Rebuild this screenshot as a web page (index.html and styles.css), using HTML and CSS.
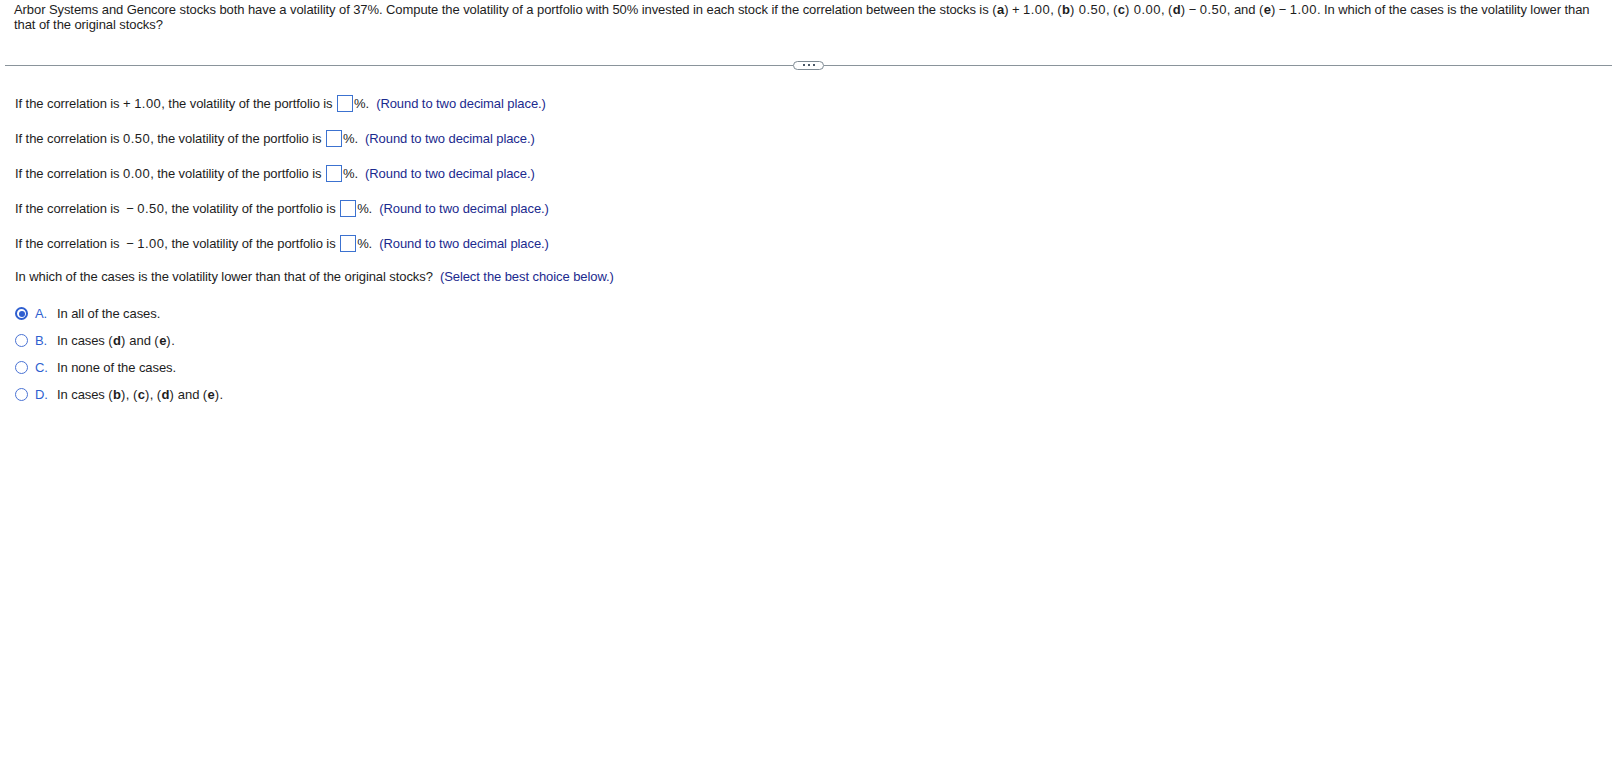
FILE: index.html
```html
<!DOCTYPE html>
<html>
<head>
<meta charset="utf-8">
<link rel="stylesheet" href="styles.css">
</head>
<body>
<div class="page">
  <p class="question">Arbor Systems and Gencore stocks both have a volatility of 37%. Compute the volatility of a portfolio with 50% invested in each stock if the correlation between the stocks is <span class="m">(<b>a</b>)&#8201;+&#8201;1.00</span>, <span class="m">(<b>b</b>) 0.50</span>, <span class="m">(<b>c</b>) 0.00</span>, <span class="m">(<b>d</b>)&#8201;&#8722;&#8201;0.50</span>, and <span class="m">(<b>e</b>)&#8201;&#8722;&#8201;1.00</span>. In which of the cases is the volatility lower than that of the original stocks?</p>

  <div class="divider">
    <span class="line"></span>
    <span class="pill"><i></i><i></i><i></i></span>
    <span class="line"></span>
  </div>

  <div class="answers">
    <div class="row">If the correlation is <span class="m">+&#8201;1.00</span>, the volatility of the portfolio is <span class="box"></span>%.  <span class="hint">(Round to two decimal place.)</span></div>
    <div class="row">If the correlation is <span class="m">0.50</span>, the volatility of the portfolio is <span class="box"></span>%.  <span class="hint">(Round to two decimal place.)</span></div>
    <div class="row">If the correlation is <span class="m">0.00</span>, the volatility of the portfolio is <span class="box"></span>%.  <span class="hint">(Round to two decimal place.)</span></div>
    <div class="row">If the correlation is <span class="m">&#8201;&#8722;&#8201;0.50</span>, the volatility of the portfolio is <span class="box"></span>%.  <span class="hint">(Round to two decimal place.)</span></div>
    <div class="row">If the correlation is <span class="m">&#8201;&#8722;&#8201;1.00</span>, the volatility of the portfolio is <span class="box"></span>%.  <span class="hint">(Round to two decimal place.)</span></div>
    <div class="row ask">In which of the cases is the volatility lower than that of the original stocks?  <span class="hint">(Select the best choice below.)</span></div>
  </div>

  <ul class="choices">
    <li><span class="radio checked"></span><span class="letter">A.</span>In all of the cases.</li>
    <li><span class="radio"></span><span class="letter">B.</span>In cases <span class="m">(<b>d</b>)</span> and <span class="m">(<b>e</b>)</span>.</li>
    <li><span class="radio"></span><span class="letter">C.</span>In none of the cases.</li>
    <li><span class="radio"></span><span class="letter">D.</span>In cases <span class="m">(<b>b</b>)</span>, <span class="m">(<b>c</b>)</span>, <span class="m">(<b>d</b>)</span> and <span class="m">(<b>e</b>)</span>.</li>
  </ul>
</div>
</body>
</html>
```

FILE: styles.css
```css
html, body {
  margin: 0;
  padding: 0;
  background: #ffffff;
}
body {
  font-family: "Liberation Sans", Arial, sans-serif;
  font-size: 13px;
  letter-spacing: -0.08px;
  color: #1d1d1d;
}
.page {
  padding: 2px 0 0 0;
}
.question {
  margin: 0;
  padding: 0 8px 0 14px;
  line-height: 15px;
}
.m {
  letter-spacing: 0.45px;
}
.m b {
  font-weight: bold;
  letter-spacing: 0;
}
.divider {
  display: flex;
  align-items: center;
  margin: 28px 1px 0 5px;
  height: 10px;
}
.line {
  flex: 1;
  height: 1px;
  background: #8a949b;
}
.pill {
  display: flex;
  align-items: center;
  justify-content: center;
  gap: 3px;
  width: 29px;
  height: 7px;
  border: 1px solid #7e8a93;
  border-radius: 5px;
  background: #fff;
}
.pill i {
  width: 2px;
  height: 2px;
  background: #4a5866;
}
.answers {
  margin-top: 25px;
  padding-left: 15px;
}
.row {
  display: flex;
  align-items: center;
  height: 17px;
  margin-bottom: 18px;
  white-space: pre;
}
.row .box {
  display: inline-block;
  width: 14px;
  height: 15px;
  border: 1px solid #3c72d0;
  margin: 0 1px 0 1px;
}
.hint {
  color: #1b2a8e;
}
.ask {
  margin-top: -2.3px;
}
.choices {
  list-style: none;
  margin: 21px 0 0 0;
  padding: 0 0 0 15px;
}
.choices li {
  display: flex;
  align-items: center;
  height: 16px;
  margin-bottom: 11px;
  white-space: pre;
}
.radio {
  box-sizing: border-box;
  width: 13px;
  height: 13px;
  border: 1px solid #4a73d4;
  border-radius: 50%;
  margin-right: 7px;
  position: relative;
}
.radio.checked {
  border: 2px solid #2f5fd0;
}
.radio.checked::after {
  content: "";
  position: absolute;
  left: 1.5px;
  top: 1.5px;
  width: 6px;
  height: 6px;
  border-radius: 50%;
  background: #2f5fd0;
}
.letter {
  color: #2f5fd0;
  width: 22px;
}
```
